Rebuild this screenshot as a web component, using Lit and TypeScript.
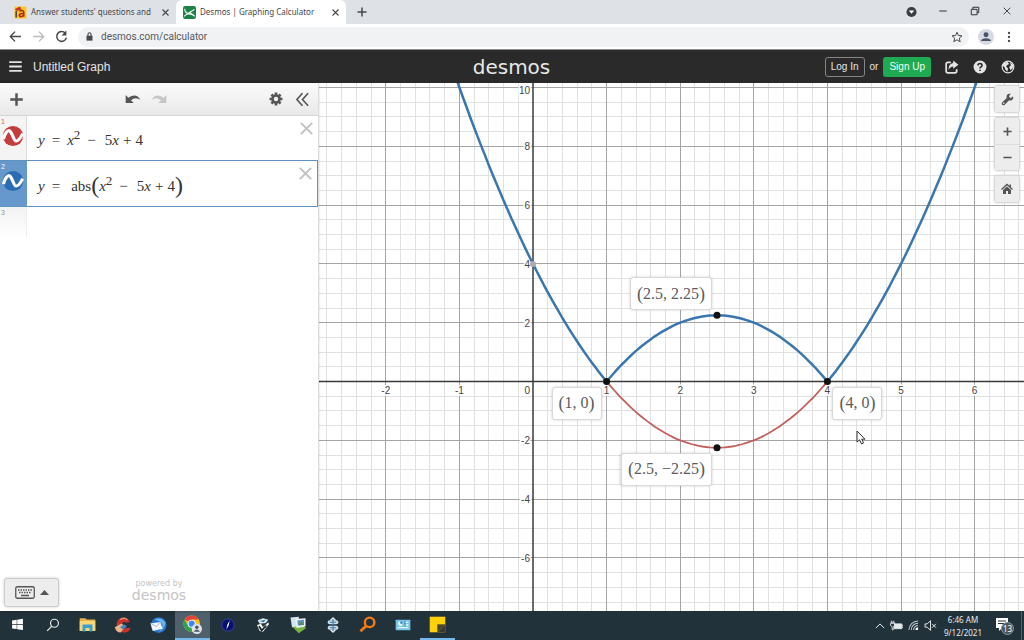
import { LitElement, html, svg, css, TemplateResult } from "lit";
import { customElement, state } from "lit/decorators.js";

/* Graph viewport: pixels per unit and where the origin falls. */
const UNIT_X = 73.6;
const UNIT_Y = 29.4;
const ORIGIN_X = 214;
const ORIGIN_Y = 298.5;
const px = (x: number) => ORIGIN_X + x * UNIT_X;
const py = (y: number) => ORIGIN_Y - y * UNIT_Y;
const parabola = (x: number) => x * x - 5 * x + 4;

interface Point {
  x: number;
  y: number;
  text: string;
  side: "left" | "right";
  place: "above" | "below";
}

const POINTS: Point[] = [
  { x: 2.5, y: 2.25, text: "2.5, 2.25", side: "left", place: "above" },
  { x: 1, y: 0, text: "1, 0", side: "left", place: "below" },
  { x: 4, y: 0, text: "4, 0", side: "right", place: "below" },
  { x: 2.5, y: -2.25, text: "2.5, −2.25", side: "left", place: "below" },
];

const icon = (size: number, body: TemplateResult | TemplateResult[], box = 24) =>
  html`<svg width=${size} height=${size} viewBox="0 0 ${box} ${box}" fill="none" aria-hidden="true">${body}</svg>`;

const cross = (size: number, w: number) =>
  icon(size, svg`<path d="M4 4L20 20M20 4L4 20" stroke="currentColor" stroke-width=${w} />`);

@customElement("browser-chrome")
export class BrowserChrome extends LitElement {
  static styles = css`
    :host { display: block; font-family: "Noto Sans", sans-serif; color: #45484c; }
    button { border: 0; padding: 0; background: none; color: inherit; font: inherit; display: grid; place-items: center; }
    svg { display: block; }
    .tabs { display: flex; height: 24px; background: #dee1e6; align-items: center; }
    .tab { display: flex; align-items: center; height: 24px; gap: 4px; box-sizing: border-box; font-size: 8px; line-height: 12px; }
    .tab.first { width: 176px; padding: 0 6px 0 14px; }
    .tab.active { width: 170px; padding: 0 6px 0 7px; background: #fff; border-radius: 6px 6px 0 0; }
    .name { flex: 1; min-width: 0; white-space: nowrap; }
    .tab button { width: 10px; height: 12px; }
    .new { width: 32px; height: 24px; }
    .window { margin-left: auto; display: flex; align-self: flex-start; height: 22px; padding-right: 1px; }
    .window button { width: 32px; }
    .nav { display: flex; align-items: center; height: 26px; background: #fff; border-bottom: 1px solid #8b8d8f; box-sizing: border-box; padding: 0 4px; }
    .nav > button { width: 23px; height: 24px; }
    .address { flex: 1; display: flex; align-items: center; height: 20px; margin: 0 5px; padding: 0 6px 0 7px; border-radius: 10px; background: #f0f2f4; gap: 7px; }
    input { flex: 1; min-width: 0; border: 0; padding: 0; outline: 0; background: none; color: #55595e; font: 10px/16px Roboto, sans-serif; }
    .off { color: #b9bbbe; }
  `;
  render() {
    return html`
      <div class="tabs">
        <div class="tab first">
          ${icon(13, svg`<rect x="1" y="1" width="22" height="22" fill="#f6c927" /><path d="M1 6L11 1L14 6L6 9Z" fill="#c8342a" /><path d="M10 10C14 7 18 8 18 12V20M18 14C11 13 9 16 10 18C12 21 17 19 18 16" stroke="#b3261e" stroke-width="3" /><path d="M4 9V21" stroke="#333" stroke-width="2.5" />`)}
          <span class="name">Answer students' questions and</span>
          <button aria-label="Close tab">${cross(9, 3)}</button>
        </div>
        <div class="tab active">
          ${icon(13, svg`<rect width="24" height="24" rx="4" fill="#1b8148" /><path d="M3 5C4 13 8 15 12 12S19 9 21 6M2 19C7 13 15 14 22 19M12 12L20 17" stroke="#e9f6ee" stroke-width="2.2" />`)}
          <span class="name">Desmos | Graphing Calculator</span>
          <button aria-label="Close tab">${cross(9, 3)}</button>
        </div>
        <button class="new" aria-label="New tab">${icon(12, svg`<path d="M12 3V21M3 12H21" stroke="currentColor" stroke-width="3" />`)}</button>
        <div class="window">
          <button aria-label="Search tabs">${icon(11, svg`<circle cx="12" cy="13" r="11" fill="#3b3e42" /><path d="M6 10H18L12 17Z" fill="#fff" />`)}</button>
          <button aria-label="Minimize">${icon(10, svg`<path d="M3 12H21" stroke="#333" stroke-width="2.4" />`)}</button>
          <button aria-label="Restore">${icon(10, svg`<path d="M3 8H17V21H3ZM7 8V3H21V16H17" stroke="#333" stroke-width="2.4" />`)}</button>
          <button aria-label="Close">${cross(10, 2.4)}</button>
        </div>
      </div>
      <div class="nav">
        <button aria-label="Back">${icon(13, svg`<path d="M22 12H3M11 3L2.500 12L11 21" stroke="currentColor" stroke-width="2.6" />`)}</button>
        <button class="off" aria-label="Forward">${icon(13, svg`<path d="M2 12H21M13 3L21.500 12L13 21" stroke="currentColor" stroke-width="2.6" />`)}</button>
        <button aria-label="Reload">${icon(13, svg`<path d="M19 6A9 9 0 1 0 21 14" stroke="currentColor" stroke-width="2.8" /><path d="M21 1V10H12Z" fill="currentColor" />`)}</button>
        <div class="address">
          ${icon(9, svg`<rect x="4" y="10" width="16" height="13" fill="currentColor" /><path d="M8 11V6A4 4 0 0 1 16 6V11" stroke="currentColor" stroke-width="3" />`)}
          <input aria-label="Address" value="desmos.com/calculator" />
          <button aria-label="Bookmark">${icon(12, svg`<path d="M12 2.500L14.900 9L22 9.600L16.600 14.300L18.300 21.500L12 17.600L5.700 21.500L7.400 14.300L2 9.600L9.100 9Z" stroke="currentColor" stroke-width="2" />`)}</button>
        </div>
        <button aria-label="Profile">${icon(16, svg`<circle cx="12" cy="12" r="12" fill="#d6dbe3" /><circle cx="12" cy="8.500" r="3.700" fill="#4a5468" /><path d="M4.500 18C5 12.500 19 12.500 19.500 18Z" fill="#4a5468" />`)}</button>
        <button aria-label="Menu">${icon(12, svg`<g fill="currentColor"><circle cx="12" cy="4" r="2.300" /><circle cx="12" cy="12" r="2.300" /><circle cx="12" cy="20" r="2.300" /></g>`)}</button>
      </div>`;
  }
}

@customElement("site-header")
export class SiteHeader extends LitElement {
  static styles = css`
    :host { display: grid; grid-template-columns: 1fr auto 1fr; align-items: center; height: 33px; box-sizing: border-box; padding: 0 9px 0 8px; background: #2a2a2a; color: #e4e4e4; font: 12px/16px "Liberation Sans", sans-serif; }
    svg { display: block; }
    .side { display: flex; align-items: center; gap: 10px; }
    .right { justify-content: flex-end; gap: 14px; }
    .account { display: flex; align-items: center; gap: 5px; font-size: 10px; }
    .logo { font: 20px/24px "DejaVu Sans", sans-serif; color: #e8e8e8; }
    button { border: 0; padding: 0; background: none; color: inherit; font: inherit; }
    .title { font-size: 12px; }
    .login, .signup { height: 20px; border-radius: 3px; }
    .login { border: 1px solid #858585; padding: 0 5px; }
    .signup { background: #1eab54; padding: 0 6px; color: #f0fff4; }
  `;
  render() {
    return html`
      <div class="side">
        <button aria-label="Open menu">${icon(15, svg`<path d="M2 5H22M2 12H22M2 19H22" stroke="currentColor" stroke-width="3" />`)}</button>
        <button class="title">Untitled Graph</button>
      </div>
      <div class="logo">desmos</div>
      <div class="side right">
        <div class="account"><button class="login">Log In</button><span>or</span><button class="signup">Sign Up</button></div>
        <button aria-label="Share">${icon(14, svg`<path d="M10 4H5Q2 4 2 7V19Q2 22 5 22H17Q20 22 20 19V16" stroke="currentColor" stroke-width="3" /><path d="M14 1L23 8L14 15V11Q9 11 6 17Q6 6 14 5Z" fill="currentColor" />`)}</button>
        <button aria-label="Help">${icon(14, svg`<circle cx="12" cy="12" r="11" fill="currentColor" /><path d="M8.500 9.500C8.500 5 15.500 5 15.500 9.200C15.500 12 12 11.500 12 14.500M12 16.500V19" stroke="#2a2a2a" stroke-width="2.800" />`)}</button>
        <button aria-label="Language">${icon(14, svg`<circle cx="12" cy="12" r="10" stroke="currentColor" stroke-width="2" /><path d="M5 5L11 3L14 7L10 9L9 12L12 14L11 20L7 16L6 12L2 10ZM15 4L21 8L20 15L16 17L14 12L17 9Z" fill="currentColor" />`)}</button>
      </div>`;
  }
}

@customElement("expression-panel")
export class ExpressionPanel extends LitElement {
  static styles = css`
    :host { display: flex; flex-direction: column; background: #fff; box-shadow: 0 0 3px rgba(0, 0, 0, 0.35); font-family: "Liberation Sans", sans-serif; z-index: 1; }
    button { border: 0; padding: 0; background: none; color: inherit; display: grid; place-items: center; }
    svg { display: block; }
    .bar { display: flex; justify-content: space-between; height: 33px; box-sizing: border-box; padding: 0 3px; border-bottom: 1px solid #d5d5d5; background: linear-gradient(#fbfbfb, #e9e9e9); color: #555; }
    .group { display: flex; }
    .bar button { width: 26px; height: 32px; }
    .off { color: #c6c6c6; }
    .row { display: flex; height: 44px; box-sizing: border-box; }
    .row.active { height: 47px; border: 1px solid #5e93c1; border-left: 0; }
    .gutter { width: 27px; box-sizing: border-box; padding: 2px 1px; background: #f4f4f4; border-right: 1px solid #ddd; font-size: 7px; line-height: 7px; color: #999; }
    .gutter button { width: 24px; height: 22px; }
    .one { color: #d0605c; }
    .active .gutter { background: #6798cc; border-color: #6798cc; color: #fff; }
    .next .gutter { height: 30px; background: linear-gradient(#f2f2f2, #fff); border-color: #eee; }
    .math { flex: 1; display: flex; align-items: center; padding: 4px 0 0 11px; color: #333; outline: 0; font: 15px/24px "Liberation Serif", serif; white-space: pre; }
    .math sup { font-size: 13px; line-height: 0; vertical-align: 6px; }
    .math .paren { font-size: 24px; line-height: 0; vertical-align: -2px; }
    .eq { margin: 0 7px; }
    .minus { margin: 0 9px 0 7px; }
    .plus { margin: 0 4px; }
    .abs { margin-left: 4px; }
    .delete { width: 24px; height: 24px; color: #c2c2c2; }
    .foot { margin-top: auto; display: grid; grid-template-columns: 1fr auto 1fr; align-items: end; padding: 0 4px 4px; color: #c4c4c4; }
    .keypad { display: flex; align-items: center; justify-content: center; gap: 5px; width: 55px; height: 29px; border: 1px solid #ccc; border-radius: 3px; background: #ededed; color: #555; box-shadow: 0 0 3px rgba(0, 0, 0, 0.2); }
    .brand { text-align: center; padding-bottom: 5px; font: 14px/14px "DejaVu Sans", sans-serif; }
    .brand small { display: block; font: 8px/9px "DejaVu Sans", sans-serif; }
  `;

  private curve(color: string) {
    return icon(22, svg`<circle cx="12" cy="12" r="11" fill=${color} /><path d="M1.500 15.500C3 9.500 6 5 8.500 6.500C11.500 8.500 12.500 17.500 15.500 17.500C18.500 17.500 20 14 22.500 9.500" stroke="#fff" stroke-width="3.400" />`);
  }

  private quadratic() {
    return html`<i>x</i><sup>2</sup><span class="minus">−</span>5<i>x</i><span class="plus">+</span>4`;
  }

  render() {
    return html`
      <div class="bar">
        <button aria-label="Add item">${icon(15, svg`<path d="M12 2V22M2 12H22" stroke="currentColor" stroke-width="4" />`)}</button>
        <div class="group">
          <button aria-label="Undo">${icon(16, svg`<path d="M1 6V18H13L9 14Q15 8 23 13Q17 2 5 10Z" fill="currentColor" />`)}</button>
          <button class="off" aria-label="Redo">${icon(16, svg`<path d="M23 6V18H11L15 14Q9 8 1 13Q7 2 19 10Z" fill="currentColor" />`)}</button>
        </div>
        <div class="group">
          <button aria-label="Edit list">${icon(14, svg`<circle cx="12" cy="12" r="6" stroke="currentColor" stroke-width="4.500" /><path d="M12 1V5M12 19V23M1 12H5M19 12H23M4.200 4.200L7 7M17 17L19.800 19.800M19.800 4.200L17 7M7 17L4.200 19.800" stroke="currentColor" stroke-width="4.500" />`)}</button>
          <button aria-label="Hide list">${icon(15, svg`<path d="M12 2L3 12L12 22M21 2L12 12L21 22" stroke="currentColor" stroke-width="2.600" />`)}</button>
        </div>
      </div>
      <div class="row">
        <div class="gutter one">1<button aria-label="Hide curve 1">${this.curve("#c43d3d")}</button></div>
        <div class="math" role="textbox" tabindex="0" aria-label="Expression 1"><span><i>y</i><span class="eq">=</span>${this.quadratic()}</span></div>
        <button class="delete" aria-label="Delete expression 1">${cross(17, 2.8)}</button>
      </div>
      <div class="row active">
        <div class="gutter">2<button aria-label="Hide curve 2">${this.curve("#2a6db3")}</button></div>
        <div class="math" role="textbox" tabindex="0" aria-label="Expression 2"><span><i>y</i><span class="eq">=</span><span class="abs">abs</span><span class="paren">(</span>${this.quadratic()}<span class="paren">)</span></span></div>
        <button class="delete" aria-label="Delete expression 2">${cross(17, 2.8)}</button>
      </div>
      <div class="row next"><div class="gutter">3</div></div>
      <div class="foot">
        <button class="keypad" aria-label="Show keypad">
          <svg width="20" height="13" viewBox="0 0 20 13" fill="none"><rect x="0.750" y="0.750" width="18.500" height="11.500" rx="1.500" stroke="currentColor" stroke-width="1.300" /><path d="M3 4H17M4 6.500H16" stroke="currentColor" stroke-width="1.400" stroke-dasharray="1.500 1" /><path d="M6 9.500H14" stroke="currentColor" stroke-width="1.500" /></svg>
          <svg width="9" height="5" viewBox="0 0 9 5"><path d="M0 5L4.500 0L9 5Z" fill="currentColor" /></svg>
        </button>
        <div class="brand"><small>powered by</small>desmos</div>
      </div>`;
  }
}

@customElement("graph-paper")
export class GraphPaper extends LitElement {
  static styles = css`
    :host { display: block; position: relative; overflow: hidden; background: #fff; font-family: "Liberation Sans", sans-serif; }
    .plot { position: absolute; inset: 0; width: 100%; height: 100%; display: block; }
    .minor { stroke: #e1e1e1; stroke-width: 1; shape-rendering: crispEdges; }
    .major { stroke: #a4a4a4; stroke-width: 1; shape-rendering: crispEdges; }
    .axis { stroke: #3a3a3a; stroke-width: 1.5; }
    .tick { font-size: 10px; fill: #444; stroke: #fff; stroke-width: 3px; paint-order: stroke; }
    .label { position: absolute; display: flex; align-items: center; justify-content: center; box-sizing: border-box; height: 33px; padding: 0 6px; border: 1px solid #d9d9d9; border-radius: 3px; background: #fff; box-shadow: 0 0 3px rgba(0, 0, 0, 0.18); color: #5c5c5c; font: 16px/20px "Liberation Serif", serif; white-space: pre; }
    .paren { font-size: 18px; }
    .left.above { transform: translate(-100%, -100%) translate(-5px, -5px); }
    .left.below { transform: translate(-100%, 0) translate(-5px, 5px); }
    .right.below { transform: translate(5px, 5px); }
    .tools { position: absolute; top: 2px; right: 4px; display: grid; gap: 4px; }
    .set { display: grid; border: 1px solid #d8d8d8; border-radius: 3px; overflow: hidden; box-shadow: 0 0 2px rgba(0, 0, 0, 0.2); }
    .set button { width: 24px; height: 26px; border: 0; padding: 0; background: #ededed; color: #555; display: grid; place-items: center; }
    .set button + button { border-top: 1px solid #dcdcdc; }
    .cursor { position: absolute; left: 537px; top: 347px; }
    svg { display: block; }
  `;
  @state() private w = 705;
  @state() private h = 528;
  private watcher?: ResizeObserver;

  connectedCallback() {
    super.connectedCallback();
    this.watcher = new ResizeObserver(() => {
      this.w = this.clientWidth || this.w;
      this.h = this.clientHeight || this.h;
    });
    this.watcher.observe(this);
  }
  disconnectedCallback() {
    super.disconnectedCallback();
    this.watcher?.disconnect();
  }

  private curve(f: (x: number) => number, from: number, to: number) {
    const parts: string[] = [];
    for (let x = from; x <= to + 0.001; x += 0.05) {
      const y = f(x);
      if (y < 10.6) parts.push(`${parts.length ? "L" : "M"}${px(x).toFixed(1)} ${py(y).toFixed(1)}`);
    }
    return parts.join("");
  }

  private range(from: number, to: number) {
    const out: number[] = [];
    for (let i = Math.ceil(from); i <= Math.floor(to); i++) out.push(i);
    return out;
  }

  render() {
    const { w, h } = this;
    const cols = this.range((-ORIGIN_X / UNIT_X) * 5, ((w - ORIGIN_X) / UNIT_X) * 5);
    const rows = this.range(((ORIGIN_Y - h) / UNIT_Y) * 2, (ORIGIN_Y / UNIT_Y) * 2);
    const vLine = (i: number, cls: string) => svg`<line class=${cls} x1=${px(i / 5)} x2=${px(i / 5)} y1="0" y2=${h} />`;
    const hLine = (i: number, cls: string) => svg`<line class=${cls} y1=${py(i / 2)} y2=${py(i / 2)} x1="0" x2=${w} />`;
    const ticksX = cols.filter((i) => i % 5 === 0 && i !== 0).map((i) => i / 5);
    const ticksY = rows.filter((i) => i % 4 === 0 && i !== 0).map((i) => i / 2);
    return html`
      <svg class="plot" fill="none">
        ${cols.filter((i) => i % 5).map((i) => vLine(i, "minor"))}
        ${rows.filter((i) => i % 4).map((i) => hLine(i, "minor"))}
        ${cols.filter((i) => i && i % 5 === 0).map((i) => vLine(i, "major"))}
        ${rows.filter((i) => i && i % 4 === 0).map((i) => hLine(i, "major"))}
        ${vLine(0, "axis")}${hLine(0, "axis")}
        ${ticksX.map((x) => svg`<text class="tick" text-anchor="middle" x=${px(x)} y=${ORIGIN_Y + 12}>${x}</text>`)}
        ${ticksY.map((y) => svg`<text class="tick" text-anchor="end" x=${ORIGIN_X - 3} y=${Math.max(py(y) + 4, 11)}>${y}</text>`)}
        <text class="tick" text-anchor="end" x=${ORIGIN_X - 3} y=${ORIGIN_Y + 12}>0</text>
        <path d=${this.curve(parabola, 1, 4)} stroke="#c4605d" stroke-width="1.800" />
        <path d=${this.curve((x) => Math.abs(parabola(x)), -2, 7)} stroke="#3a76af" stroke-width="2.500" stroke-linejoin="round" />
        <circle cx=${px(0)} cy=${py(4)} r="3" fill="#a9adb0" />
        ${POINTS.map((p) => svg`<circle cx=${px(p.x)} cy=${py(p.y)} r="3.500" fill="#111" />`)}
      </svg>
      ${POINTS.map(
        (p) => html`<div class="label ${p.side} ${p.place}" style="left:${px(p.x)}px;top:${py(p.y)}px"><span class="paren">(</span>${p.text}<span class="paren">)</span></div>`
      )}
      <div class="tools">
        <div class="set"><button aria-label="Graph settings">${icon(13, svg`<path d="M22 6L18 9.500L14.500 6L18 2C13 0 9 4 10.500 9L2 17.500C0 21 3.500 24 6.500 22L15 13.500C20 15 24 11 22 6Z" fill="currentColor" /><circle cx="5" cy="19" r="1.300" fill="#fff" />`)}</button></div>
        <div class="set">
          <button aria-label="Zoom in">${icon(11, svg`<path d="M12 3V21M3 12H21" stroke="currentColor" stroke-width="3.600" />`)}</button>
          <button aria-label="Zoom out">${icon(11, svg`<path d="M3 12H21" stroke="currentColor" stroke-width="3.600" />`)}</button>
        </div>
        <div class="set"><button aria-label="Default viewport">${icon(12, svg`<path d="M1 13L12 3L23 13" stroke="currentColor" stroke-width="2.600" /><path d="M17 3H20V9L17 6ZM4 14L12 7L20 14V22H14V16H10V22H4Z" fill="currentColor" />`)}</button></div>
      </div>
      <svg class="cursor" width="10" height="15" viewBox="0 0 10 15"><path d="M1 1V12L3.600 9.800L5.500 14L7.500 13L5.700 9.200H9Z" fill="#fff" stroke="#333" stroke-width="1" /></svg>`;
  }
}

@customElement("task-bar")
export class TaskBar extends LitElement {
  static styles = css`
    :host { display: flex; height: 29px; background: #22323a; color: #e6eaec; font-family: "Noto Sans", sans-serif; }
    button { border: 0; padding: 0; background: none; color: inherit; font: inherit; display: grid; place-items: center; }
    svg { display: block; }
    .app { width: 35px; border-bottom: 2px solid transparent; }
    .open { border-color: #76b9ed; }
    .current { background: #4f616c; }
    .tray { margin-left: auto; display: flex; align-items: center; }
    .tray button { width: 17px; height: 29px; }
    .tray .clock { width: 48px; font-size: 8px; line-height: 13px; place-content: center; }
    .tray .notes { width: 34px; }
    .peek { width: 3px; height: 29px; border-left: 1px solid #51606a; box-sizing: border-box; }
    .count { font: 8px "Noto Sans", sans-serif; fill: #fff; }
  `;
  private apps: [string, string, TemplateResult, number][] = [
    ["Start", "", svg`<path d="M2 4.500L10.500 3.300V11.300H2ZM11.500 3.100L22 1.600V11.300H11.500ZM2 12.300H10.500V20.500L2 19.300ZM11.500 12.300H22V22.200L11.500 20.700Z" fill="#fff" />`, 13],
    ["Search", "", svg`<circle cx="14.500" cy="9" r="6.800" stroke="#e8eaeb" stroke-width="2" /><path d="M10 14L2 22" stroke="#e8eaeb" stroke-width="2.200" />`, 14],
    ["File Explorer", "", svg`<path d="M1 3H9L11 5H23V21H1Z" fill="#e6b347" /><path d="M1 7H23V21H1Z" fill="#f8d777" /><path d="M5 22V12H19V22H15V17H9V22Z" fill="#3c9dd0" />`, 17],
    ["Cleaner", "", svg`<path d="M21 8C18 1 9 0 5 6C1 13 6 23 14 22C18 22 21 20 22 16H16C13 18 10 15 10 12C11 8 14 7 16 9Z" fill="#c8322b" /><path d="M8 5Q13 1 18 5" stroke="#ef8a70" stroke-width="2" /><path d="M1 15L10 10L15 14L9 22Q3 22 1 15Z" fill="#e9b787" /><path d="M8 15L14 11L17 14L12 18Z" fill="#4584c3" />`, 18],
    ["Mail", "", svg`<circle cx="13" cy="12" r="10.500" fill="#2775ca" /><path d="M7 5Q16 0 22 9Q20 19 13 21Q22 13 15 8Q10 5 7 5Z" fill="#6ab4f0" /><path d="M2 10L15 8L18 17L5 20Z" fill="#f2f6fa" /><path d="M2 10L10 14L15 8" stroke="#9ab" stroke-width="1" />`, 18],
    ["Chrome", "open current", svg`<circle cx="11" cy="11" r="10.500" fill="#fbc116" /><path d="M11 11L1.900 5.800A10.500 10.500 0 0 1 20.100 5.800H11Z" fill="#e2443a" /><path d="M11 11L6.500 13.600L1.900 5.800A10.500 10.500 0 0 0 11 21.500L15.500 13.600Z" fill="#31a350" /><circle cx="11" cy="11" r="5" fill="#fff" /><circle cx="11" cy="11" r="3.900" fill="#4285f4" /><circle cx="17.500" cy="17.500" r="6.500" fill="#dfe4e9" /><circle cx="17.500" cy="15.500" r="2.200" fill="#4a5468" /><path d="M13.500 21Q17.500 15.500 21.500 21Z" fill="#4a5468" />`, 19],
    ["Compass", "", svg`<circle cx="12" cy="12" r="10.500" fill="#08106e" stroke="#3945a5" stroke-width="1.500" /><path d="M15 4L13 13L9 20L11 11Z" fill="#fff" />`, 14],
    ["Recorder", "", svg`<path d="M4 5L12 2L20 4L16 9L7 10Z" fill="#dfeaf0" /><path d="M7 6L16 4L13 8Z" fill="#2875a8" /><path d="M3 12L9 10L12 15L20 8L21 11L12 22L7 21Z" fill="#f1f4f5" /><path d="M6 14L10 20L17 13" stroke="#182126" stroke-width="2.500" />`, 16],
    ["Image tool", "", svg`<path d="M4 14L13 10L23 16L13 23Z" fill="#77b344" /><path d="M2 2L13 1L14 13L4 15Z" fill="#d6e5ed" /><path d="M9 4L22 3V14L10 16Z" fill="#eef4f8" /><path d="M11 6L20 5V12L12 13Z" fill="#5b95bc" /><path d="M13 12L16 7L20 12Z" fill="#5d8b4b" />`, 18],
    ["Move tool", "", svg`<path d="M12 0L17 5H7ZM12 24L7 19H17Z" fill="#e1edf5" /><rect x="4" y="5" width="16" height="6" rx="3" fill="#cfe3f2" /><rect x="4" y="13" width="16" height="6" rx="3" fill="#cfe3f2" /><path d="M12 3V21M7 8H17M7 16H17" stroke="#3e749b" stroke-width="1.600" />`, 16],
    ["Find files", "", svg`<circle cx="15" cy="9" r="6.700" stroke="#f37a18" stroke-width="3.500" /><path d="M10 14L2 21.500" stroke="#f37a18" stroke-width="4" />`, 17],
    ["Control Panel", "", svg`<rect x="1" y="4" width="22" height="16" rx="1" fill="#75c4ec" /><circle cx="8" cy="10" r="3.500" fill="#e8f8ff" /><path d="M8 10V6.500A3.500 3.500 0 0 1 11.500 10Z" fill="#247cb5" /><path d="M14 8H20M14 12H20M4 16H20" stroke="#eaf8ff" stroke-width="2" /><path d="M15 6V14" stroke="#247cb5" stroke-width="1.500" />`, 16],
    ["Sticky Notes", "open", svg`<path d="M1 1H23V23H1Z" fill="#fdd20b" /><path d="M12 12H23V23H12Z" fill="#353a37" /><path d="M12 23V12H23Z" fill="#e8a90c" /><path d="M12 12H23L12 23Z" fill="#4a4630" />`, 17],
  ];
  render() {
    return html`
      ${this.apps.map(([name, cls, body, size]) => html`<button class="app ${cls}" aria-label=${name}>${icon(size, body)}</button>`)}
      <div class="tray">
        <button aria-label="Show hidden icons">${icon(10, svg`<path d="M2 17L12 7L22 17" stroke="currentColor" stroke-width="2.400" />`)}</button>
        <button aria-label="Battery">${icon(13, svg`<rect x="8" y="9" width="13" height="9" fill="#e6eaec" stroke="#e6eaec" stroke-width="1.500" /><path d="M22 11H24V16H22ZM1 6H8M3 3V8M7 3V8M1 8H9V12L6 14V20H4V14L1 12Z" stroke="#e6eaec" stroke-width="1.500" />`)}</button>
        <button aria-label="Network">${icon(11, svg`<path d="M2 22A20 20 0 0 1 22 2M7 22A15 15 0 0 1 22 7M12 22A10 10 0 0 1 22 12" stroke="#c1cace" stroke-width="2.200" /><path d="M16 22A6 6 0 0 1 22 16V22Z" fill="#fff" />`)}</button>
        <button aria-label="Volume muted">${icon(13, svg`<path d="M2 9H6L12 3V21L6 15H2Z" stroke="currentColor" stroke-width="1.800" /><path d="M15 9L22 16M22 9L15 16" stroke="currentColor" stroke-width="1.800" />`)}</button>
        <button class="clock"><span>6:46 AM</span><span>9/12/2021</span></button>
        <button class="notes" aria-label="Notifications, 13 new"><svg width="19" height="18" viewBox="0 0 19 18"><path d="M1 1H13V11H7L4 14V11H1Z" fill="#fff" /><path d="M3 4H11M3 6.500H11" stroke="#22323a" /><circle cx="12.500" cy="11.500" r="6" fill="#4b575e" stroke="#8c979d" /><text class="count" x="12.500" y="14.500" text-anchor="middle">13</text></svg></button>
        <span class="peek"></span>
      </div>`;
  }
}

@customElement("app-root")
export class AppRoot extends LitElement {
  static styles = css`
    :host { display: flex; flex-direction: column; height: 100vh; overflow: hidden; }
    .work { flex: 1; min-height: 0; display: flex; }
    .panel { flex: 0 0 318px; margin-right: 1px; }
    .graph { flex: 1; min-width: 0; }
  `;
  render() {
    return html`
      <browser-chrome></browser-chrome>
      <site-header></site-header>
      <main class="work">
        <expression-panel class="panel"></expression-panel>
        <graph-paper class="graph"></graph-paper>
      </main>
      <task-bar></task-bar>`;
  }
}
